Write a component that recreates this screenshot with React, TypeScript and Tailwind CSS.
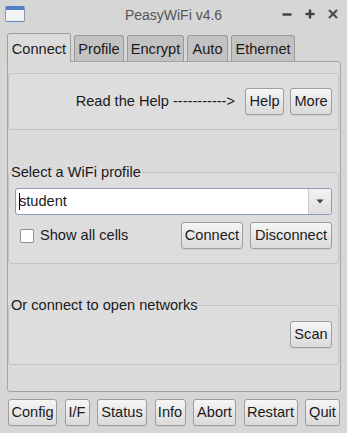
import React from 'react';

const tabs = [
  { label: 'Connect', w: 'w-[64px]', active: true },
  { label: 'Profile', w: 'w-[50px]', active: false },
  { label: 'Encrypt', w: 'w-[57px]', active: false },
  { label: 'Auto', w: 'w-[41px]', active: false },
  { label: 'Ethernet', w: 'w-[64px]', active: false },
];

const footer = [
  { label: 'Config', w: 'w-[49px]' },
  { label: 'I/F', w: 'w-[25px]' },
  { label: 'Status', w: 'w-[50px]' },
  { label: 'Info', w: 'w-[31px]' },
  { label: 'Abort', w: 'w-[43px]' },
  { label: 'Restart', w: 'w-[54px]' },
  { label: 'Quit', w: 'w-[35px]' },
];

function Btn({ label, className = '' }: { label: string; className?: string }) {
  return (
    <button
      type="button"
      className={`h-[27px] shrink-0 rounded-[3px] border border-[#9d9d9d] bg-linear-to-b from-[#f6f6f6] to-[#dadada] text-[#1a1a1a] leading-none shadow-[0_1px_0_rgba(0,0,0,0.06)] ${className}`}
    >
      {label}
    </button>
  );
}

export default function App() {
  return (
    <div className="w-[347px] h-[433px] flex flex-col overflow-hidden bg-[#d6d6d6] text-[14.6px] text-[#1a1a1a] font-['Liberation_Sans',Arial,sans-serif]">
      {/* Title bar */}
      <div className="h-[28px] shrink-0 grid grid-cols-[1fr_auto_1fr] items-center">
        <div className="pl-[5px]">
          <div className="w-[20px] h-[16px] rounded-[2px] border border-[#8a98ae] border-t-[4px] border-t-[#4d80c9] border-b-[#5b86c4] bg-[#f3f3f3]" />
        </div>
        <div className="text-[14px] text-[#555555] leading-none pt-px">PeasyWiFi v4.6</div>
        <div className="flex justify-end items-center gap-[13px] pr-[9px]">
          <svg width="10" height="10" viewBox="0 0 10 10">
            <line x1="0.5" y1="5.5" x2="9.5" y2="5.5" stroke="#3d3d3d" strokeWidth="2.4" />
          </svg>
          <svg width="10" height="10" viewBox="0 0 10 10">
            <line x1="0.5" y1="5" x2="9.5" y2="5" stroke="#3d3d3d" strokeWidth="2.4" />
            <line x1="5" y1="0.5" x2="5" y2="9.5" stroke="#3d3d3d" strokeWidth="2.4" />
          </svg>
          <svg width="10" height="10" viewBox="0 0 10 10">
            <line x1="1" y1="1" x2="9" y2="9" stroke="#4a4a4a" strokeWidth="2.1" />
            <line x1="9" y1="1" x2="1" y2="9" stroke="#4a4a4a" strokeWidth="2.1" />
          </svg>
        </div>
      </div>

      {/* Tabs */}
      <div className="mt-[5px] ml-[7px] flex items-end gap-[3px]">
        {tabs.map(t =>
          t.active ? (
            <div
              key={t.label}
              className={`${t.w} h-[29px] -mb-px relative z-10 flex justify-center pt-[5px] rounded-t-[3px] border border-b-0 border-[#9f9f9f] bg-[#dbdbdb]`}
            >
              {t.label}
            </div>
          ) : (
            <div
              key={t.label}
              className={`${t.w} h-[26px] flex justify-center pt-[3px] rounded-t-[3px] border border-b-0 border-[#9a9a9a] bg-[#c2c2c2]`}
            >
              {t.label}
            </div>
          )
        )}
      </div>

      {/* Tab panel */}
      <div className="ml-[7px] w-[334px] h-[331px] shrink-0 flex flex-col pr-px rounded-b-[3px] rounded-tr-[3px] border border-[#a3a3a3] bg-[#dbdbdb]">
        <div className="mt-[11px] h-[57px] flex items-center justify-end pr-[6px] rounded-[3px] border border-[#c3c3c3] bg-[#dddddd]">
          <span className="mr-[10px]">Read the Help -----------&gt;</span>
          <Btn label="Help" className="w-[39px]" />
          <Btn label="More" className="w-[42px] ml-[6px]" />
        </div>

        <fieldset className="mt-[34px] px-[2px] pb-[14px] rounded-[3px] border border-[#c3c3c3] bg-[#dddddd]">
          <legend className="leading-[17px]">Select a WiFi profile</legend>
          <div className="px-[4px] pt-[7px]">
            <div className="h-[27px] flex rounded-[3px] border border-[#8c9bb1] bg-white overflow-hidden">
              <div className="flex-1 flex items-center pl-[3px]">
                <span className="w-px h-[17px] bg-black" />
                <span className="-ml-px">student</span>
              </div>
              <div className="w-[23px] flex items-center justify-center border-l border-[#c9c9c9] bg-linear-to-b from-[#f4f4f4] to-[#dedede]">
                <svg width="8" height="5" viewBox="0 0 8 5">
                  <path d="M0.5 0.5 L7.5 0.5 L4 4.5 Z" fill="#444444" />
                </svg>
              </div>
            </div>
            <div className="mt-[7px] flex items-center">
              <span className="ml-[5px] mt-[1px] w-[14px] h-[14px] rounded-[2px] border border-[#8f8f8f] bg-white" />
              <span className="ml-[6px] flex-1">Show all cells</span>
              <Btn label="Connect" className="w-[62px]" />
              <Btn label="Disconnect" className="w-[82px] ml-[7px]" />
            </div>
          </div>
        </fieldset>

        <fieldset className="mt-[33px] px-[2px] pb-[16px] rounded-[3px] border border-[#c3c3c3] bg-[#dddddd]">
          <legend className="leading-[17px]">Or connect to open networks</legend>
          <div className="px-[4px] pt-[7px] flex justify-end">
            <Btn label="Scan" className="w-[42px]" />
          </div>
        </fieldset>
      </div>

      {/* Footer buttons */}
      <div className="mt-[7px] pl-[8px] pr-[7px] flex justify-between">
        {footer.map(b => (
          <Btn key={b.label} label={b.label} className={b.w} />
        ))}
      </div>
    </div>
  );
}
